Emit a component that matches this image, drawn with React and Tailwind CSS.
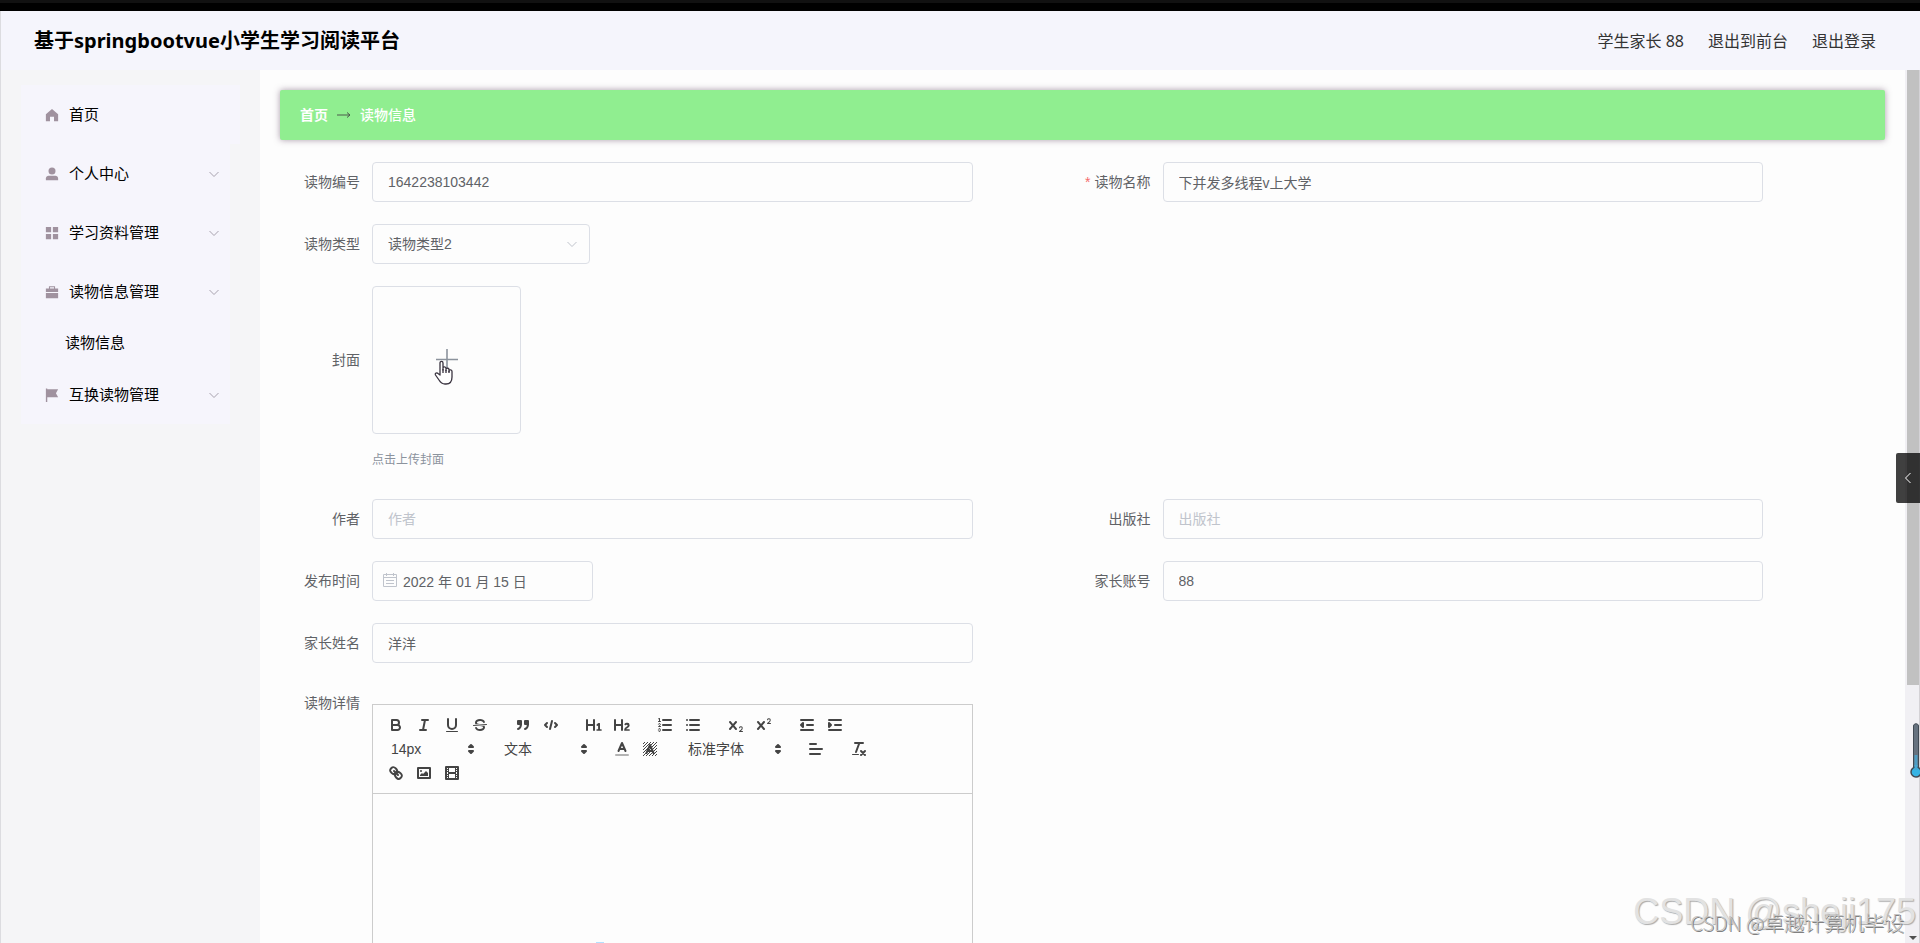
import React from "react";

const S = "fill-none stroke-[#444] stroke-2 [stroke-linecap:round] [stroke-linejoin:round]";
const THIN = "fill-none stroke-[#444] stroke-1 [stroke-linecap:round] [stroke-linejoin:round]";
const F = "fill-[#444]";
const FS = "fill-[#444] stroke-[#444] stroke-2 [stroke-linecap:round] [stroke-linejoin:round]";

const crossShape =
  "M9.65,5.241a1,1,0,0,0-1.409.108L6,7.964,3.759,5.349A1,1,0,0,0,2.192,6.59178Q2.21541,6.6213,2.241,6.649L4.684,9.5,2.241,12.35A1,1,0,0,0,3.71,13.70722q0.02557-.02768.049-0.05722L6,11.036,8.241,13.65a1,1,0,1,0,1.567-1.24277Q9.78459,12.3777,9.759,12.35L7.316,9.5,9.759,6.651A1,1,0,0,0,9.65,5.241Z";

const icons = {
  加粗: (
    <>
      <path className={S} d="M5,4H9.5A2.5,2.5,0,0,1,12,6.5v0A2.5,2.5,0,0,1,9.5,9H5V4Z" />
      <path className={S} d="M5,9h5.5A2.5,2.5,0,0,1,13,11.5v0A2.5,2.5,0,0,1,10.5,14H5V9Z" />
    </>
  ),
  斜体: <path className={S} d="M7,4H13M5,14H11M8,14L10,4" />,
  下划线: (
    <>
      <path className={S} d="M5,3V9a4.012,4.012,0,0,0,4,4H9a4.012,4.012,0,0,0,4-4V3" />
      <rect className={F} height="1" rx="0.5" width="12" x="3" y="15" />
    </>
  ),
  删除线: (
    <>
      <path className={THIN} d="M15.5,8.5L2.5,9.5" />
      <path className={F} d="M9.007,8C6.542,7.791,6,7.519,6,6.5,6,5.792,7.283,5,9,5c1.571,0,2.765.679,2.969,1.309a1,1,0,0,0,1.9-.617C13.356,4.106,11.354,3,9,3,6.2,3,4,4.538,4,6.5a3.2,3.2,0,0,0,.5,1.843Z" />
      <path className={F} d="M8.984,10C11.457,10.208,12,10.479,12,11.5c0,0.708-1.283,1.5-3,1.5-1.571,0-2.765-.679-2.969-1.309a1,1,0,1,0-1.9.617C4.644,13.894,6.646,15,9,15c2.8,0,5-1.538,5-3.5a3.2,3.2,0,0,0-.5-1.843Z" />
    </>
  ),
  引用: (
    <>
      <rect className={FS} height="3" width="3" x="4" y="5" />
      <rect className={FS} height="3" width="3" x="11" y="5" />
      <path className={S} d="M7,8c0,4.031-3,5-3,5M14,8c0,4.031-3,5-3,5" />
    </>
  ),
  代码: <path className={S} d="M5,7L3,9L5,11M13,7L15,9L13,11M10,5L8,13" />,
  一级标题: (
    <path className={F} d="M10,4V14a1,1,0,0,1-2,0V10H3v4a1,1,0,0,1-2,0V4A1,1,0,0,1,3,4V8H8V4a1,1,0,0,1,2,0Zm6.06787,9.209H14.98975V7.59863a.54085.54085,0,0,0-.605-.60547h-.62744a1.01119,1.01119,0,0,0-.748.29688L11.645,8.56641a.5435.5435,0,0,0-.022.8584l.28613.30762a.53861.53861,0,0,0,.84717.0332l.09912-.08789a1.2137,1.2137,0,0,0,.2417-.35254h.02246s-.01123.30859-.01123.60547V13.209H12.041a.54085.54085,0,0,0-.605.60547v.43945a.54085.54085,0,0,0,.605.60547h4.02686a.54085.54085,0,0,0,.605-.60547v-.43945A.54085.54085,0,0,0,16.06787,13.209Z" />
  ),
  二级标题: (
    <path className={F} d="M16.73975,13.81445v.43945a.54085.54085,0,0,1-.605.60547H11.855a.58392.58392,0,0,1-.64893-.60547V14.0127c0-2.90527,3.39941-3.42187,3.39941-4.55469a.77675.77675,0,0,0-.84717-.78125,1.17684,1.17684,0,0,0-.83594.38477c-.2749.26367-.561.374-.85791.13184l-.4292-.34082c-.30811-.24219-.38525-.51758-.1543-.81445a2.97155,2.97155,0,0,1,2.45361-1.17676,2.45393,2.45393,0,0,1,2.68408,2.40918c0,2.45312-3.1792,2.92676-3.27832,3.93848h2.79443A.54085.54085,0,0,1,16.73975,13.81445ZM9,3A.99974.99974,0,0,0,8,4V8H3V4A1,1,0,0,0,1,4V14a1,1,0,0,0,2,0V10H8v4a1,1,0,0,0,2,0V4A.99974.99974,0,0,0,9,3Z" />
  ),
  有序列表: (
    <>
      <path className={S} d="M7,4H15M7,9H15M7,14H15" />
      <path className={THIN} d="M2.5,5.5H4.5" />
      <path className={F} d="M3.5,6A0.5,0.5,0,0,1,3,5.5V3.085l-0.276.138A0.5,0.5,0,0,1,2.053,3c-0.124-.247-0.023-0.324.224-0.447l1-.5A0.5,0.5,0,0,1,4,2.5v3A0.5,0.5,0,0,1,3.5,6Z" />
      <path className={THIN} d="M4.5,10.5h-2c0-.234,1.85-1.076,1.85-2.234A0.959,0.959,0,0,0,2.5,8.156" />
      <path className={THIN} d="M2.5,14.846a0.959,0.959,0,0,0,1.85-.109A0.7,0.7,0,0,0,3.75,14a0.688,0.688,0,0,0,.6-0.736,0.959,0.959,0,0,0-1.85-.109" />
    </>
  ),
  无序列表: <path className={S} d="M6,4H15M6,9H15M6,14H15M3,4H3.01M3,9H3.01M3,14H3.01" />,
  下标: (
    <>
      <path className={F} d="M15.5,15H13.861a3.858,3.858,0,0,0,1.914-2.975,1.8,1.8,0,0,0-1.6-1.751A1.921,1.921,0,0,0,12.021,11.7a0.50013,0.50013,0,1,0,.957.291h0a0.914,0.914,0,0,1,1.053-.725,0.81,0.81,0,0,1,.744.762c0,1.076-1.16971,1.86982-1.93971,2.43082A1.45639,1.45639,0,0,0,12,15.5a0.5,0.5,0,0,0,.5.5h3A0.5,0.5,0,0,0,15.5,15Z" />
      <path className={F} d={crossShape} />
    </>
  ),
  上标: (
    <>
      <path className={F} d="M15.5,7H13.861a4.015,4.015,0,0,0,1.914-2.975,1.8,1.8,0,0,0-1.6-1.751A1.922,1.922,0,0,0,12.021,3.7a0.5,0.5,0,1,0,.957.291,0.917,0.917,0,0,1,1.053-.725,0.81,0.81,0,0,1,.744.762c0,1.077-1.164,1.925-1.934,2.486A1.423,1.423,0,0,0,12,7.5a0.5,0.5,0,0,0,.5.5h3A0.5,0.5,0,0,0,15.5,7Z" />
      <path className={F} d={crossShape} />
    </>
  ),
  减少缩进: (
    <>
      <path className={S} d="M3,14H15M3,4H15M9,9H15" />
      <path className={FS} d="M5,7V11L3,9Z" />
    </>
  ),
  增加缩进: (
    <>
      <path className={S} d="M3,14H15M3,4H15M9,9H15" />
      <path className={FS} d="M3,7V11L5,9Z" />
    </>
  ),
  文字颜色: (
    <>
      <path className={S + " opacity-40"} d="M3,15H15" />
      <path className={S} d="M5.5,11L9,3L12.5,11M11.63,9H6.38" />
    </>
  ),
  背景颜色: (
    <>
      <defs>
        <pattern id="hatch" width="3" height="3" patternUnits="userSpaceOnUse">
          <path className="stroke-[#444] stroke-1" d="M-1,1L1,-1M0,3L3,0M2,4L4,2" />
        </pattern>
      </defs>
      <path fill="url(#hatch)" d="M2,2H16V16H2Z" />
      <path className={S} d="M5.5,13L9,5L12.5,13M11.63,11H6.38" />
    </>
  ),
  对齐: <path className={S} d="M3,9H15M3,14H13M3,4H9" />,
  清除格式: (
    <>
      <path className={S} d="M5,3H13M6,12L9.35,3M11,11L15,15M15,11L11,15" />
      <rect className={F} height="1" rx="0.5" width="7" x="2" y="14" />
    </>
  ),
  链接: (
    <>
      <path className={S} d="M7,7L11,11" />
      <path className={S} d="M8.9,4.577a3.476,3.476,0,0,1,.36,4.679A3.476,3.476,0,0,1,4.577,8.9C3.185,7.5,2.035,6.4,4.217,4.217S7.5,3.185,8.9,4.577Z" />
      <path className={S} d="M13.423,9.1a3.476,3.476,0,0,0-4.679-.36,3.476,3.476,0,0,0,.36,4.679c1.392,1.392,2.5,2.542,4.679.36S14.815,10.5,13.423,9.1Z" />
    </>
  ),
  图片: (
    <>
      <rect className={S} height="10" width="12" x="3" y="4" />
      <circle className={F} cx="6" cy="7" r="1" />
      <path className={F} d="M5,12V11L7,9L8,10L11,7L13,9V12Z" />
    </>
  ),
  视频: (
    <>
      <rect className={S} height="12" width="12" x="3" y="3" />
      <path className={F} d="M5,3h1v12H5ZM12,3h1v12h-1ZM5,8h8v2H5ZM3,5h3v1H3ZM3,7h3v1H3ZM3,10h3v1H3ZM3,12h3v1H3ZM12,5h3v1h-3ZM12,7h3v1h-3ZM12,10h3v1h-3ZM12,12h3v1h-3Z" />
    </>
  ),
};

const Group = ({ names }) => (
  <div className="mr-[15px] flex">
    {names.map((n) => (
      <button key={n} type="button" aria-label={n} className="flex h-6 w-7 items-center justify-center">
        <svg viewBox="0 0 18 18" className="size-[18px]">{icons[n]}</svg>
      </button>
    ))}
  </div>
);

const Picker = ({ text, width }) => (
  <div className={"mr-[15px] " + width}>
    <button type="button" className="flex h-6 w-full items-center justify-between pl-[9px] text-[#444]">
      {text}
      <svg viewBox="0 0 18 18" className="size-[18px]">
        <path className={FS} d="M7,11L9,13L11,11ZM7,7L9,5L11,7Z" />
      </svg>
    </button>
  </div>
);

const Chevron = ({ className }) => (
  <svg viewBox="0 0 12 12" className={"size-3 fill-none " + className}>
    <path d="M1.5 4L6 8.500L10.500 4" />
  </svg>
);

const menuIcons = {
  home: <path d="M8 1L15 7.200V15H10.300V10H5.700V15H1V7.200Z" />,
  user: (
    <>
      <circle cx="8" cy="4.500" r="4" />
      <path d="M1 15V13C1 11 2.500 10 4 10H12C13.500 10 15 11 15 13V15Z" />
    </>
  ),
  grid: <path d="M1 1H7V7H1ZM9 1H15V7H9ZM1 9H7V15H1ZM9 9H15V15H9Z" />,
  bag: <path fillRule="evenodd" d="M4.500 4V1.500H11.500V4H15V8H1V4ZM5.700 2.700V4H10.300V2.700ZM1 9.200H15V15H1Z" />,
  flag: <path d="M1 0.500H2.600V1.500H15L12.500 6L15 10.500H2.600V16H1Z" />,
};

const MenuItem = ({ icon, text, wide }) => (
  <li className={wide ? "-mr-2.5 bg-[#f6f5fc]" : ""}>
    <a href="#" className="flex h-[59px] items-center pr-2.5 pl-6 text-[15px] text-black">
      <svg viewBox="0 0 16 16" className="mr-2.5 size-3.5 fill-[#a0929f]">{menuIcons[icon]}</svg>
      {text}
      {!wide && <Chevron className="ml-auto stroke-[#a8a2ae]" />}
    </a>
  </li>
);

const Field = ({ id, label, required, children, className = "h-10 items-center" }) => (
  <div className={"flex " + className}>
    <label htmlFor={id} className="w-20 shrink-0 pr-3 text-right whitespace-nowrap text-[#606266]">
      {required && <span className="mr-1 text-[#f56c6c]">*</span>}
      {label}
    </label>
    {children}
  </div>
);

const box = "h-10 rounded border border-[#dcdfe6] bg-transparent text-sm text-[#606266] outline-none";

const TextField = ({ id, label, value, required, placeholder }) => (
  <Field id={id} label={label} required={required}>
    <input id={id} type="text" defaultValue={value} placeholder={placeholder} className={box + " w-[76%] px-[15px] placeholder:text-[#c0c4cc]"} />
  </Field>
);

export default function App() {
  return (
    <div className="relative flex h-screen flex-col overflow-hidden bg-[#fdfdfd] font-['Liberation_Sans','Noto_Sans_CJK_SC',sans-serif] text-sm">
      <div className="h-[11px] shrink-0 border-t-[3px] border-[#111] bg-black" />
      <header className="flex h-[59px] shrink-0 items-center justify-between border-l border-[#dcdce0] bg-[#f5f5fc] pr-11 pl-[33px] font-['Noto_Sans','Noto_Sans_CJK_SC',sans-serif]">
        <h1 className="text-xl font-bold text-black">基于springbootvue小学生学习阅读平台</h1>
        <nav className="flex gap-6 text-base text-[#333]">
          <span>学生家长 88</span>
          <a href="#">退出到前台</a>
          <a href="#">退出登录</a>
        </nav>
      </header>

      <div className="flex min-h-0 flex-1">
        <aside className="w-[260px] shrink-0 border-l border-[#dcdce0] bg-[#f5f5f7] pt-[15px] pr-[30px] pl-5">
          <ul className="bg-[#f6f5fc]">
            <MenuItem icon="home" text="首页" wide />
            <MenuItem icon="user" text="个人中心" />
            <MenuItem icon="grid" text="学习资料管理" />
            <MenuItem icon="bag" text="读物信息管理" />
            <li>
              <a href="#" className="flex h-11 items-center pl-11 text-[15px] text-black">读物信息</a>
            </li>
            <MenuItem icon="flag" text="互换读物管理" />
          </ul>
        </aside>

        <main className="min-w-0 flex-1 overflow-hidden px-5 pt-5">
          <nav className="flex h-[50px] items-center rounded-xs bg-[#90ee90] px-5 text-white shadow-[0_0_6px_rgba(90,60,90,0.5)]">
            <a href="#" className="font-bold">首页</a>
            <svg viewBox="0 0 14 8" className="mx-[9px] h-2 w-3.5 fill-none stroke-[#4c5a4c]">
              <path d="M0 4H13M10 1.500L13 4L10 6.500" />
            </svg>
            <span className="font-medium">读物信息</span>
          </nav>

          <form className="grid grid-cols-2 gap-y-[22px] px-3 pt-[22px]">
            <TextField id="no" label="读物编号" value="1642238103442" />
            <TextField id="name" label="读物名称" value="下并发多线程v上大学" required />

            <div className="col-span-2">
              <Field id="type" label="读物类型">
                <div className="relative">
                  <select id="type" className={box + " w-[218px] appearance-none px-[15px]"}>
                    <option>读物类型2</option>
                  </select>
                  <Chevron className="pointer-events-none absolute top-3.5 right-3 stroke-[#c0c4cc]" />
                </div>
              </Field>
            </div>

            <div className="col-span-2">
              <Field id="cover" label="封面" className="items-center">
                <button id="cover" type="button" aria-label="上传封面" className="relative flex h-[148px] w-[149px] items-center justify-center rounded border border-[#dcdfe6]">
                  <svg viewBox="0 0 24 24" className="size-6 stroke-[#8c939d] stroke-[1.6]">
                    <path d="M1 11.500H23M12 1V23" />
                  </svg>
                  <svg viewBox="0 0 20 26" className="absolute top-[73px] left-[61px] h-[26px] w-5 fill-white stroke-[#3a3440] stroke-[1.3] [stroke-linejoin:round]">
                    <path d="M6 15V3C6 0.800 9 0.800 9 3V10V8C9 6.500 12 6.500 12 8.500V10.500V9C12.500 7.800 15 8 15 9.500V11.500V10.500C15.500 9.500 18 9.500 18 11.500V17C18 21 16.500 24 12 24H11C8 24 6.500 22.500 5 20L1.500 15C0.500 13 3 12.300 4 13.500Z" />
                    <path className="fill-none" d="M9 9V13M12 10V13M15 11V13" />
                  </svg>
                </button>
              </Field>
              <p className="mt-[17px] mb-[7px] pl-20 text-xs leading-[19px] text-[#8c939d]">点击上传封面</p>
            </div>

            <TextField id="author" label="作者" placeholder="作者" />
            <TextField id="press" label="出版社" placeholder="出版社" />

            <Field id="date" label="发布时间">
              <div className="relative">
                <input id="date" type="text" defaultValue="2022 年 01 月 15 日" className={box + " w-[221px] pr-3 pl-[30px]"} />
                <svg viewBox="0 0 14 14" className="pointer-events-none absolute top-3 left-[11px] size-3.5 fill-none stroke-[#c0c4cc]">
                  <path d="M0.500 1.500H13.500V13.500H0.500ZM0.500 4.500H13.500M3.500 0V3M10.500 0V3M3 7.500H11M3 10.500H11" />
                </svg>
              </div>
            </Field>
            <TextField id="account" label="家长账号" value="88" />

            <div className="col-span-2 grid grid-cols-2">
              <TextField id="parent" label="家长姓名" value="洋洋" />
            </div>

            <Field id="detail" label="读物详情" className="items-start pt-2">
              <div className="mt-[11px] w-[76%] border border-[#ccc]">
                <div className="flex flex-wrap border-b border-[#ccc] py-2 pr-[7px] pl-[9px]">
                  <Group names={["加粗", "斜体", "下划线", "删除线"]} />
                  <Group names={["引用", "代码"]} />
                  <Group names={["一级标题", "二级标题"]} />
                  <Group names={["有序列表", "无序列表"]} />
                  <Group names={["下标", "上标"]} />
                  <Group names={["减少缩进", "增加缩进"]} />
                  <Picker text="14px" width="w-[98px]" />
                  <Picker text="文本" width="w-[98px]" />
                  <Group names={["文字颜色", "背景颜色"]} />
                  <Picker text="标准字体" width="w-[108px]" />
                  <Group names={["对齐"]} />
                  <Group names={["清除格式"]} />
                  <Group names={["链接", "图片", "视频"]} />
                </div>
                <textarea id="detail" className="block h-[400px] w-full resize-none p-4 outline-none" />
              </div>
            </Field>
          </form>
        </main>

        <div className="w-[15px] shrink-0 border-r border-[#d4d2d6] bg-[#f1f0f4] pl-0.5">
          <div className="h-[615px] bg-[#c1c1c1]" />
        </div>
      </div>

      <button type="button" aria-label="展开" className="absolute top-[453px] right-0 flex h-[50px] w-6 items-center justify-center rounded-l-xs bg-black/75">
        <svg viewBox="0 0 8 12" className="h-3 w-2 fill-none stroke-white">
          <path d="M6.500 1L1.500 6L6.500 11" />
        </svg>
      </button>

      <svg viewBox="0 0 10 56" className="absolute top-[723px] right-0 h-14 w-2.5">
        <path className="fill-[#66727f] stroke-[#414a54]" d="M3.500 45V3C3.500 0 8.500 0 8.500 3V45Z" />
        <rect className="fill-[#4f9dc4]" x="4.500" y="32" width="3" height="14" />
        <circle className="fill-[#36b3e4] stroke-[#414a54] stroke-[1.500]" cx="6" cy="49" r="5" />
        <rect className="fill-[#46a8d4]" x="4.500" y="42" width="3" height="5" />
      </svg>
      <svg viewBox="0 0 8 4" className="absolute right-[3px] bottom-[3px] h-1 w-2 fill-[#505050]">
        <path d="M0 0H8L4 4Z" />
      </svg>
      <span className="absolute bottom-0 left-[596px] h-px w-2 bg-[#b3e0ff]" />

      <p className="pointer-events-none absolute right-1 bottom-[11px] text-4xl leading-10 text-[#e2e2e2] [text-shadow:1px_1px_1px_#aaa]">CSDN @sheji175</p>
      <p className="pointer-events-none absolute right-4 bottom-1.5 font-['Noto_Sans_CJK_SC',sans-serif] text-xl leading-7 font-light text-[#c4c4c4] [text-shadow:1px_1px_0_#808080]">CSDN @卓越计算机毕设</p>
    </div>
  );
}
